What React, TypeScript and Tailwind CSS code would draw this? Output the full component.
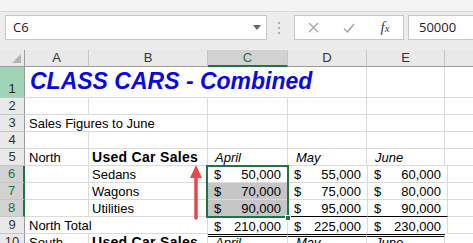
import React from 'react';

const cellBase =
  "shrink-0 h-[17px] border-r border-b border-[#dadada] flex items-end leading-[15px] text-[13px] text-black whitespace-nowrap";

const RowHead = ({ n, tone = 'normal', tall = false }: { n: number; tone?: 'normal' | 'sel' | 'green'; tall?: boolean }) => {
  const toneCls =
    tone === 'sel'
      ? 'bg-[#d2d2d2] text-[#217346] border-r-2 border-r-[#217346]'
      : tone === 'green'
        ? 'bg-[#9fd5b6] text-[#222] border-r border-r-[#9b9b9b]'
        : 'bg-[#e9e9e9] text-[#333] border-r border-r-[#9b9b9b]';
  return (
    <div
      className={`shrink-0 w-[25px] ${tall ? 'h-[31px]' : 'h-[17px]'} border-b border-b-[#c6c6c6] flex items-end justify-center leading-[15px] pb-[1px] text-[13px] ${toneCls}`}
    >
      {n}
    </div>
  );
};

const Money = ({ v, cls = '' }: { v: string; cls?: string }) => (
  <div className={`${cellBase} w-[80px] justify-between px-[6px] ${cls}`}>
    <span>$</span>
    <span>{v}</span>
  </div>
);

const Row = ({ children }: { children: React.ReactNode }) => <div className="flex">{children}</div>;

const ColHead = ({ label, cls, sel = false }: { label: string; cls: string; sel?: boolean }) => (
  <div
    className={`shrink-0 h-[17px] ${cls} flex items-center justify-center text-[13px] border-r border-r-[#c6c6c6] ${
      sel
        ? 'bg-[#d2d2d2] text-[#217346] border-b-2 border-b-[#217346]'
        : 'bg-[#e9e9e9] text-[#333] border-b border-b-[#9b9b9b]'
    }`}
  >
    {label}
  </div>
);

export default function App() {
  return (
    <div className="w-[473px] h-[243px] overflow-hidden bg-white relative font-['Liberation_Sans',Arial,sans-serif]">
      {/* ribbon edge */}
      <div className="h-[12px] bg-[#f4f4f4] border-b border-[#d8d8d8]" />

      {/* formula bar */}
      <div className="h-[38px] bg-[#ececec] flex items-start pt-[3px]">
        <div className="ml-[5px] w-[262px] h-[25px] bg-white border border-[#c6c6c6] flex items-center justify-between pl-[7px] pr-[5px] font-['Open_Sans',sans-serif] text-[13px] text-[#222]">
          <span>C6</span>
          <svg width="8" height="5" viewBox="0 0 8 5">
            <path d="M0 0 L8 0 L4 5 Z" fill="#666" />
          </svg>
        </div>
        <div className="ml-[11px] h-[25px] flex flex-col justify-center gap-[3px]">
          <span className="block w-[2px] h-[2px] bg-[#b0b0b0]" />
          <span className="block w-[2px] h-[2px] bg-[#b0b0b0]" />
          <span className="block w-[2px] h-[2px] bg-[#b0b0b0]" />
        </div>
        <div className="ml-[14px] w-[110px] h-[25px] bg-white border border-[#c6c6c6] flex items-center">
          <div className="w-[36px] flex justify-center">
            <svg width="11" height="11" viewBox="0 0 11 11">
              <path d="M1 1 L10 10 M10 1 L1 10" stroke="#a3a3a3" strokeWidth="1.2" />
            </svg>
          </div>
          <div className="w-[36px] flex justify-center">
            <svg width="12" height="10" viewBox="0 0 12 10">
              <path d="M1 5.5 L4.5 9 L11 1" stroke="#a3a3a3" strokeWidth="1.4" fill="none" />
            </svg>
          </div>
          <div className="w-[36px] flex justify-center items-baseline font-['Liberation_Serif',serif] italic text-[#444]">
            <span className="text-[15px]">f</span>
            <span className="text-[11px]">x</span>
          </div>
        </div>
        <div className="ml-[4px] flex-1 h-[25px] bg-white border border-r-0 border-[#c6c6c6] flex items-center pl-[10px] font-['Open_Sans',sans-serif] text-[13px] text-[#222]">
          50000
        </div>
      </div>

      {/* column headers */}
      <div className="flex">
        <div className="shrink-0 w-[25px] h-[17px] bg-[#e9e9e9] border-r border-b border-[#9b9b9b] flex items-end justify-end pr-[3px] pb-[3px]">
          <svg width="9" height="9" viewBox="0 0 9 9">
            <path d="M9 0 L9 9 L0 9 Z" fill="#b4b4b4" />
          </svg>
        </div>
        <ColHead label="A" cls="w-[64px]" />
        <ColHead label="B" cls="w-[119px]" />
        <ColHead label="C" cls="w-[80px]" sel />
        <ColHead label="D" cls="w-[79px]" />
        <ColHead label="E" cls="w-[78px]" />
        <ColHead label="" cls="w-[60px]" />
      </div>

      {/* row 1 */}
      <div className="flex">
        <RowHead n={1} tone="green" tall />
        <div className="shrink-0 w-[342px] h-[31px] border-r border-b border-[#dadada] flex items-end pl-[5px] pb-[4px] text-[23px] leading-[23px] font-bold italic text-[#0a0ae0] whitespace-nowrap">
          CLASS CARS - Combined
        </div>
        <div className="shrink-0 w-[78px] h-[31px] border-r border-b border-[#dadada]" />
        <div className="shrink-0 w-[60px] h-[31px] border-b border-[#dadada]" />
      </div>

      <Row>
        <RowHead n={2} />
        <div className={`${cellBase} w-[64px]`} />
        <div className={`${cellBase} w-[119px]`} />
        <div className={`${cellBase} w-[80px]`} />
        <div className={`${cellBase} w-[79px]`} />
        <div className={`${cellBase} w-[78px]`} />
        <div className={`${cellBase} w-[60px]`} />
      </Row>

      <Row>
        <RowHead n={3} />
        <div className={`${cellBase} w-[183px] pl-[4px]`}>Sales Figures to June</div>
        <div className={`${cellBase} w-[80px]`} />
        <div className={`${cellBase} w-[79px]`} />
        <div className={`${cellBase} w-[78px]`} />
        <div className={`${cellBase} w-[60px]`} />
      </Row>

      <Row>
        <RowHead n={4} />
        <div className={`${cellBase} w-[64px]`} />
        <div className={`${cellBase} w-[119px]`} />
        <div className={`${cellBase} w-[80px]`} />
        <div className={`${cellBase} w-[79px]`} />
        <div className={`${cellBase} w-[78px]`} />
        <div className={`${cellBase} w-[60px]`} />
      </Row>

      <Row>
        <RowHead n={5} />
        <div className={`${cellBase} w-[64px] pl-[4px]`}>North</div>
        <div className={`${cellBase} w-[119px] pl-[3px] font-bold text-[14px] tracking-[0.3px]`}>Used Car Sales</div>
        <div className={`${cellBase} w-[80px] pl-[7px] italic`}>April</div>
        <div className={`${cellBase} w-[79px] pl-[8px] italic`}>May</div>
        <div className={`${cellBase} w-[78px] pl-[8px] italic`}>June</div>
        <div className={`${cellBase} w-[60px]`} />
      </Row>

      <Row>
        <RowHead n={6} tone="sel" />
        <div className={`${cellBase} w-[64px]`} />
        <div className={`${cellBase} w-[119px] pl-[3px]`}>Sedans</div>
        <Money v="50,000" />
        <Money v="55,000" cls="w-[79px]" />
        <Money v="60,000" cls="w-[78px]" />
        <div className={`${cellBase} w-[60px]`} />
      </Row>

      <Row>
        <RowHead n={7} tone="sel" />
        <div className={`${cellBase} w-[64px]`} />
        <div className={`${cellBase} w-[119px] pl-[3px]`}>Wagons</div>
        <Money v="70,000" cls="bg-[#c6c6c6]" />
        <Money v="75,000" cls="w-[79px]" />
        <Money v="80,000" cls="w-[78px]" />
        <div className={`${cellBase} w-[60px]`} />
      </Row>

      <Row>
        <RowHead n={8} tone="sel" />
        <div className={`${cellBase} w-[64px]`} />
        <div className={`${cellBase} w-[119px] pl-[3px]`}>Utilities</div>
        <Money v="90,000" cls="bg-[#c6c6c6] border-b-black" />
        <Money v="95,000" cls="w-[79px] border-b-black" />
        <Money v="90,000" cls="w-[78px] border-b-black" />
        <div className={`${cellBase} w-[60px]`} />
      </Row>

      <Row>
        <RowHead n={9} />
        <div className={`${cellBase} w-[183px] pl-[4px]`}>North Total</div>
        <Money v="210,000" cls="border-b-0" />
        <Money v="225,000" cls="w-[79px] border-b-0" />
        <Money v="230,000" cls="w-[78px] border-b-0" />
        <div className={`${cellBase} w-[60px]`} />
      </Row>

      <Row>
        <RowHead n={10} />
        <div className={`${cellBase} w-[64px] pl-[4px]`}>South</div>
        <div className={`${cellBase} w-[119px] pl-[3px] font-bold text-[14px] tracking-[0.3px]`}>Used Car Sales</div>
        <div className={`${cellBase} w-[80px] pl-[7px] italic border-t-[3px] border-t-black border-double`}>April</div>
        <div className={`${cellBase} w-[79px] pl-[8px] italic border-t-[3px] border-t-black border-double`}>May</div>
        <div className={`${cellBase} w-[78px] pl-[8px] italic border-t-[3px] border-t-black border-double`}>June</div>
        <div className={`${cellBase} w-[60px]`} />
      </Row>

      {/* selection C6:C8 */}
      <div className="absolute left-[206px] top-[165px] w-[83px] h-[53px] border-2 border-[#217346] pointer-events-none" />
      <div className="absolute left-[285px] top-[215px] w-[6px] h-[6px] bg-[#217346] border border-white" />

      {/* red arrow */}
      <svg className="absolute left-[187px] top-[163px]" width="18" height="58" viewBox="0 0 18 58">
        <path d="M9 14 L9 55" stroke="#e5474a" strokeWidth="3.5" strokeLinecap="round" />
        <path d="M9 2 L15 15 L3 15 Z" fill="#e5474a" />
      </svg>
    </div>
  );
}
